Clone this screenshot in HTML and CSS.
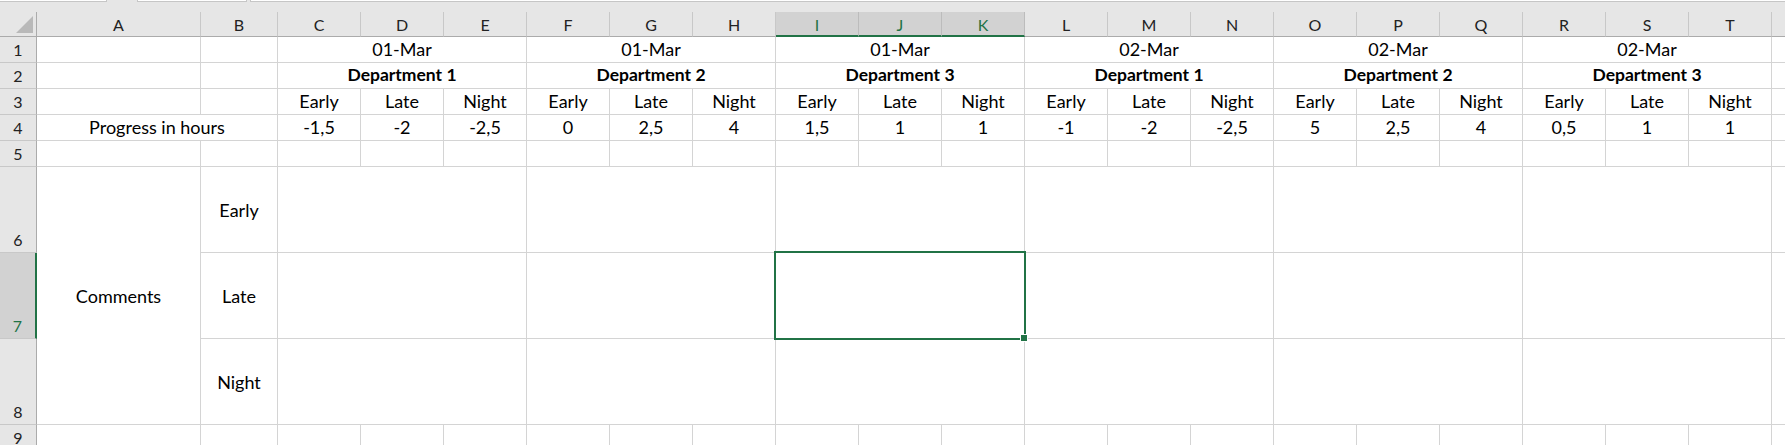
FILE: index.html
```html
<!DOCTYPE html>
<html lang="en">
<head>
  <meta charset="UTF-8" />
  <meta name="viewport" content="width=device-width, initial-scale=1.0"/>
  <title>Shift Progress</title>
  <link rel="stylesheet" href="styles.css">
</head>
<body>

  <!-- formula bar edge -->
  <div class="topbar">
    <div class="namebox"></div>
    <div class="fxbox"></div>
    <div class="formula"></div>
  </div>

  <div class="sheet">
    <!-- column headers -->
    <div class="corner"><svg width="17" height="17" viewBox="0 0 17 17"><polygon points="17,0 17,17 0,17" fill="#b9b9b9"/></svg></div>
    <div class="colhead">A</div>
    <div class="colhead">B</div>
    <div class="colhead">C</div>
    <div class="colhead">D</div>
    <div class="colhead">E</div>
    <div class="colhead">F</div>
    <div class="colhead">G</div>
    <div class="colhead">H</div>
    <div class="colhead sel">I</div>
    <div class="colhead sel">J</div>
    <div class="colhead sel">K</div>
    <div class="colhead">L</div>
    <div class="colhead">M</div>
    <div class="colhead">N</div>
    <div class="colhead">O</div>
    <div class="colhead">P</div>
    <div class="colhead">Q</div>
    <div class="colhead">R</div>
    <div class="colhead">S</div>
    <div class="colhead">T</div>
    <div class="colhead"></div>

    <!-- row 1: dates -->
    <div class="rowhead">1</div>
    <div class="cell"></div>
    <div class="cell"></div>
    <div class="cell span3">01-Mar</div>
    <div class="cell span3">01-Mar</div>
    <div class="cell span3">01-Mar</div>
    <div class="cell span3">02-Mar</div>
    <div class="cell span3">02-Mar</div>
    <div class="cell span3">02-Mar</div>
    <div class="cell"></div>

    <!-- row 2: departments -->
    <div class="rowhead">2</div>
    <div class="cell"></div>
    <div class="cell"></div>
    <div class="cell span3 bold">Department 1</div>
    <div class="cell span3 bold">Department 2</div>
    <div class="cell span3 bold">Department 3</div>
    <div class="cell span3 bold">Department 1</div>
    <div class="cell span3 bold">Department 2</div>
    <div class="cell span3 bold">Department 3</div>
    <div class="cell"></div>

    <!-- row 3: shifts -->
    <div class="rowhead">3</div>
    <div class="cell"></div>
    <div class="cell"></div>
    <div class="cell">Early</div><div class="cell">Late</div><div class="cell">Night</div>
    <div class="cell">Early</div><div class="cell">Late</div><div class="cell">Night</div>
    <div class="cell">Early</div><div class="cell">Late</div><div class="cell">Night</div>
    <div class="cell">Early</div><div class="cell">Late</div><div class="cell">Night</div>
    <div class="cell">Early</div><div class="cell">Late</div><div class="cell">Night</div>
    <div class="cell">Early</div><div class="cell">Late</div><div class="cell">Night</div>
    <div class="cell"></div>

    <!-- row 4: progress -->
    <div class="rowhead">4</div>
    <div class="cell span2">Progress in hours</div>
    <div class="cell">-1,5</div><div class="cell">-2</div><div class="cell">-2,5</div>
    <div class="cell">0</div><div class="cell">2,5</div><div class="cell">4</div>
    <div class="cell">1,5</div><div class="cell">1</div><div class="cell">1</div>
    <div class="cell">-1</div><div class="cell">-2</div><div class="cell">-2,5</div>
    <div class="cell">5</div><div class="cell">2,5</div><div class="cell">4</div>
    <div class="cell">0,5</div><div class="cell">1</div><div class="cell">1</div>
    <div class="cell"></div>

    <!-- row 5: spacer -->
    <div class="rowhead">5</div>
    <div class="cell"></div>
    <div class="cell"></div>
    <div class="cell"></div><div class="cell"></div><div class="cell"></div>
    <div class="cell"></div><div class="cell"></div><div class="cell"></div>
    <div class="cell"></div><div class="cell"></div><div class="cell"></div>
    <div class="cell"></div><div class="cell"></div><div class="cell"></div>
    <div class="cell"></div><div class="cell"></div><div class="cell"></div>
    <div class="cell"></div><div class="cell"></div><div class="cell"></div>
    <div class="cell"></div>

    <!-- rows 6-8: comments -->
    <div class="rowhead">6</div>
    <div class="cell tall mid">Comments</div>
    <div class="cell mid">Early</div>
    <div class="cell span3"></div>
    <div class="cell span3"></div>
    <div class="cell span3"></div>
    <div class="cell span3"></div>
    <div class="cell span3"></div>
    <div class="cell span3"></div>
    <div class="cell"></div>

    <div class="rowhead sel">7</div>
    <div class="cell mid">Late</div>
    <div class="cell span3"></div>
    <div class="cell span3"></div>
    <div class="cell span3 active"><div class="selection"><span class="handle"></span></div></div>
    <div class="cell span3"></div>
    <div class="cell span3"></div>
    <div class="cell span3"></div>
    <div class="cell"></div>

    <div class="rowhead">8</div>
    <div class="cell mid">Night</div>
    <div class="cell span3"></div>
    <div class="cell span3"></div>
    <div class="cell span3"></div>
    <div class="cell span3"></div>
    <div class="cell span3"></div>
    <div class="cell span3"></div>
    <div class="cell"></div>

    <!-- row 9 -->
    <div class="rowhead">9</div>
    <div class="cell"></div>
    <div class="cell"></div>
    <div class="cell"></div><div class="cell"></div><div class="cell"></div>
    <div class="cell"></div><div class="cell"></div><div class="cell"></div>
    <div class="cell"></div><div class="cell"></div><div class="cell"></div>
    <div class="cell"></div><div class="cell"></div><div class="cell"></div>
    <div class="cell"></div><div class="cell"></div><div class="cell"></div>
    <div class="cell"></div><div class="cell"></div><div class="cell"></div>
    <div class="cell"></div>
  </div>

</body>
</html>
```

FILE: styles.css
```css
* {
  box-sizing: border-box;
}

body {
  margin: 0;
  width: 1785px;
  height: 445px;
  overflow: hidden;
  background: #fff;
  font-family: Lato, "Liberation Sans", sans-serif;
  color: #000;
}

/* bottom edge of the formula bar */
.topbar {
  display: flex;
  height: 12px;
  background: #e6e6e6;
}
.topbar div {
  height: 2px;
  background: #fff;
  border: 1px solid #c6c6c6;
  border-top: none;
}
.namebox {
  width: 107px;
  border-left: none !important;
}
.fxbox {
  width: 110px;
  margin-left: 30px;
}
.formula {
  flex: 1;
  margin-left: 3px;
  border-right: none !important;
}

/* grid */
.sheet {
  display: grid;
  width: max-content;
  grid-template-columns: 37px 164px 77px repeat(19, 83px);
  grid-template-rows: 25px repeat(5, 26px) repeat(3, 86px) 26px;
}

.corner {
  background: #e6e6e6;
  border-right: 1px solid #ababab;
  border-bottom: 1px solid #ababab;
  display: flex;
  justify-content: flex-end;
  align-items: flex-end;
  padding: 0 3px 3px 0;
}
.corner svg {
  display: block;
}

.colhead {
  background: #e6e6e6;
  border-right: 1px solid #c8c8c8;
  border-bottom: 1px solid #ababab;
  display: flex;
  align-items: center;
  justify-content: center;
  font-size: 16px;
  color: #222;
  padding-top: 1px;
}
.colhead.sel {
  background: #d2d2d2;
  color: #217346;
  border-right-color: #bcbcbc;
  border-bottom: 2px solid #217346;
  padding-top: 2px;
}

.rowhead {
  background: #e6e6e6;
  border-right: 1px solid #ababab;
  border-bottom: 1px solid #c8c8c8;
  display: flex;
  align-items: flex-end;
  justify-content: center;
  font-size: 16px;
  color: #222;
  padding-bottom: 3px;
}
.rowhead.sel {
  background: #d2d2d2;
  color: #217346;
  border-right: 2px solid #217346;
}

.cell {
  border-right: 1px solid #d4d4d4;
  border-bottom: 1px solid #d4d4d4;
  display: flex;
  align-items: flex-end;
  justify-content: center;
  font-size: 18px;
  line-height: 20px;
  padding-bottom: 3px;
  white-space: nowrap;
}
.cell.bold {
  font-weight: bold;
  font-size: 17.5px;
}
.cell.mid {
  align-items: center;
  padding-bottom: 0;
}
.span2 {
  grid-column: span 2;
}
.span3 {
  grid-column: span 3;
}
.tall {
  grid-row: span 3;
}

/* active cell outline */
.active {
  position: relative;
}
.selection {
  position: absolute;
  left: -2px;
  top: -2px;
  width: 252px;
  height: 89px;
  border: 2px solid #217346;
}
.handle {
  position: absolute;
  right: -4px;
  bottom: -4px;
  width: 8px;
  height: 8px;
  background: #217346;
  border: 1px solid #fff;
}
```
